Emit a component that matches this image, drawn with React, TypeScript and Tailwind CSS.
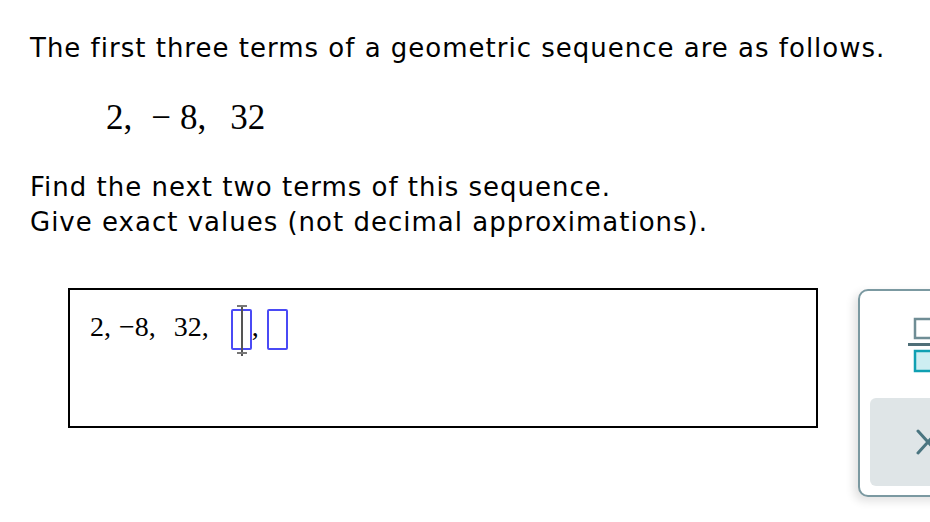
export default function App() {
  return (
    <div className="relative h-[522px] w-[930px] overflow-hidden bg-white">
      <div
        className="pl-[30px] pt-[31px] text-[26px] leading-[35px] tracking-[1px] text-black [font-variant-ligatures:none]"
        style={{ fontFamily: '"DejaVu Sans", Verdana, sans-serif' }}
      >
        <p>The first three terms of a geometric sequence are as follows.</p>
        <div
          className="mt-[32px] ml-[76px] flex items-baseline text-[35px] leading-[40px] tracking-normal"
          style={{ fontFamily: '"Liberation Serif", "Times New Roman", serif' }}
        >
          <span>2,</span>
          <span className="ml-[19px]">−</span>
          <span className="ml-[9px]">8,</span>
          <span className="ml-[24px]">32</span>
        </div>
        <p className="mt-[32px]">Find the next two terms of this sequence.</p>
        <p>Give exact values (not decimal approximations).</p>
      </div>

      <div className="mt-[48px] flex items-start">
        {/* answer box */}
        <div className="ml-[68px] h-[140px] w-[750px] shrink-0 border-2 border-black">
          <div
            className="mt-[19px] ml-[20px] flex items-end text-[28px] leading-[32px]"
            style={{ fontFamily: '"Liberation Serif", "Times New Roman", serif' }}
          >
            <span className="pb-[7px]">2,</span>
            <span className="ml-[8px] pb-[7px]">−</span>
            <span className="pb-[7px]">8,</span>
            <span className="ml-[18px] pb-[7px]">32,</span>
            <span className="relative ml-[22px] h-[41px] w-[21px] shrink-0 rounded-[2px] border-2 border-[#4a4af5]">
              <span className="absolute left-[8px] top-[-5px] h-[50px] w-[2px] bg-[#555]" />
              <span className="absolute left-[4px] top-[-6px] h-[2px] w-[10px] bg-[#777]" />
              <span className="absolute left-[4px] bottom-[-6px] h-[2px] w-[10px] bg-[#777]" />
            </span>
            <span className="pb-[7px]">,</span>
            <span className="ml-[8px] h-[41px] w-[21px] shrink-0 rounded-[2px] border-2 border-[#4a4af5]" />
          </div>
        </div>

        {/* side tools panel */}
        <div className="ml-[40px] mt-[1px] flex h-[208px] w-[120px] shrink-0 flex-col rounded-[10px] border-2 border-[#7b99a1] bg-white shadow-[-4px_4px_10px_rgba(0,0,0,0.12)]">
          <div className="flex h-[107px] items-center pl-[48px]">
            <svg width="30" height="56" viewBox="0 0 30 56">
              <rect x="7" y="2" width="18" height="19" fill="none" stroke="#6f8d95" strokeWidth="2.5" />
              <rect x="0" y="26" width="30" height="3" fill="#4f6f78" />
              <rect x="7" y="34" width="18" height="20" fill="#cdeef2" stroke="#0fa0b2" strokeWidth="2.5" />
            </svg>
          </div>
          <div className="ml-[10px] flex h-[88px] w-[110px] items-center rounded-[6px] bg-[#dfe5e7] pl-[46px]">
            <svg width="24" height="26" viewBox="0 0 24 26">
              <path d="M2 2 L22 24 M22 2 L2 24" stroke="#4a7580" strokeWidth="3" strokeLinecap="round" fill="none" />
            </svg>
          </div>
        </div>
      </div>
    </div>
  );
}
